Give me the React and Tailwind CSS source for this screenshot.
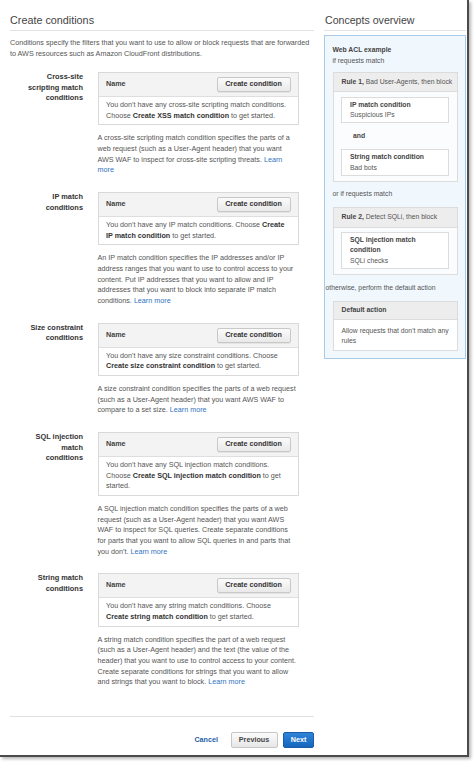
const sections = [
  {
    label: "Cross-site scripting match conditions",
    empty: (
      <>
        You don't have any cross-site scripting match conditions. Choose{" "}
        <b className="font-bold text-[#333]">Create XSS match condition</b> to get started.
      </>
    ),
    desc: "A cross-site scripting match condition specifies the parts of a web request (such as a User-Agent header) that you want AWS WAF to inspect for cross-site scripting threats.",
  },
  {
    label: "IP match conditions",
    empty: (
      <>
        You don't have any IP match conditions. Choose{" "}
        <b className="font-bold text-[#333]">Create IP match condition</b> to get started.
      </>
    ),
    desc: "An IP match condition specifies the IP addresses and/or IP address ranges that you want to use to control access to your content. Put IP addresses that you want to allow and IP addresses that you want to block into separate IP match conditions.",
  },
  {
    label: "Size constraint conditions",
    empty: (
      <>
        You don't have any size constraint conditions. Choose{" "}
        <b className="font-bold text-[#333]">Create size constraint condition</b> to get started.
      </>
    ),
    desc: "A size constraint condition specifies the parts of a web request (such as a User-Agent header) that you want AWS WAF to compare to a set size.",
  },
  {
    label: "SQL injection match conditions",
    empty: (
      <>
        You don't have any SQL injection match conditions. Choose{" "}
        <b className="font-bold text-[#333]">Create SQL injection match condition</b> to get started.
      </>
    ),
    desc: "A SQL injection match condition specifies the parts of a web request (such as a User-Agent header) that you want AWS WAF to inspect for SQL queries. Create separate conditions for parts that you want to allow SQL queries in and parts that you don't.",
  },
  {
    label: "String match conditions",
    empty: (
      <>
        You don't have any string match conditions. Choose{" "}
        <b className="font-bold text-[#333]">Create string match condition</b> to get started.
      </>
    ),
    desc: "A string match condition specifies the part of a web request (such as a User-Agent header) and the text (the value of the header) that you want to use to control access to your content. Create separate conditions for strings that you want to allow and strings that you want to block.",
  },
];

function Section({ s, first }) {
  return (
    <div className={`flex ${first ? "mt-[12.8px]" : "mt-[16px]"}`}>
      <div className="w-[73px] shrink-0 pl-[13px] text-right text-[7.4px] leading-[10.6px] font-bold text-[#333]">
        {s.label}
      </div>
      <div className="ml-[14.5px] w-[201px] shrink-0">
        <div className="border border-[#d9d9d9]">
          <div className="flex h-[24px] items-center justify-between border-b border-[#dedede] bg-[#f3f3f3] pl-[7.5px] pr-[7px]">
            <span className="text-[7.2px] font-bold text-[#444]">Name</span>
            <button className="h-[15px] w-[74px] rounded-[2px] border border-[#c8c8c8] bg-gradient-to-b from-[#fbfbfb] to-[#e9e9e9] text-[7.2px] font-bold text-[#333] shadow-[0_1px_0_rgba(0,0,0,0.06)]">
              Create condition
            </button>
          </div>
          <div className="bg-white py-[3px] pl-[7.5px] pr-[6px] text-[7.2px] leading-[10.65px] text-[#555]">
            {s.empty}
          </div>
        </div>
        <p className="mt-[8px] pr-[1px] text-[7.2px] leading-[10.65px] text-[#555]">
          {s.desc} <span className="text-[#2f74c0]">Learn more</span>
        </p>
      </div>
    </div>
  );
}

function CondBox({ title, sub }) {
  return (
    <div className="border border-[#dcdcdc] bg-white py-[2px] pl-[8px] pr-[6px] leading-[10.4px]">
      <div className="font-bold text-[#444]">{title}</div>
      <div>{sub}</div>
    </div>
  );
}

function Rule({ num, text, children }) {
  return (
    <div className="border border-[#dcdcdc] bg-[#fbfcfd]">
      <div className="flex h-[19.5px] items-center whitespace-nowrap border-b border-[#dcdcdc] bg-[#ededed] pl-[8px]">
        <b className="font-bold text-[#444]">Rule {num},</b>&nbsp;{text}
      </div>
      <div className="px-[7.5px] py-[4.5px]">{children}</div>
    </div>
  );
}

export default function App() {
  return (
    <div className="h-[762px] w-[474px] overflow-hidden bg-white font-['Liberation_Sans',Arial,sans-serif]">
      <div className="flex h-[757px] w-[469px] border-b-2 border-r-2 border-[#4b4b4b] bg-white pl-[10px] shadow-[2px_2px_3px_rgba(0,0,0,0.28)]">
        <div className="w-[304px] shrink-0">
          <h1 className="border-b border-[#e3e3e3] pb-[3px] pt-[12.5px] text-[10.8px] font-normal leading-[14px] text-[#444]">
            Create conditions
          </h1>
          <p className="mt-[7.7px] text-[7.2px] leading-[10.6px] text-[#555]">
            Conditions specify the filters that you want to use to allow or block requests that are forwarded to AWS
            resources such as Amazon CloudFront distributions.
          </p>
          {sections.map((s, i) => (
            <Section key={i} s={s} first={i === 0} />
          ))}
          <div className="mt-[28px] border-t border-[#e0e0e0]" />
          <div className="mt-[15.5px] flex items-center justify-end">
            <span className="mr-[12.5px] text-[7.2px] font-bold text-[#1f5fa8]">Cancel</span>
            <button className="h-[15.5px] w-[47px] rounded-[2px] border border-[#c6c6c6] bg-gradient-to-b from-[#fcfcfc] to-[#e6e6e6] text-[7.2px] font-bold text-[#444]">
              Previous
            </button>
            <button className="ml-[5.5px] h-[15.5px] w-[31px] rounded-[2px] border border-[#1a5ca6] bg-gradient-to-b from-[#2f84d8] to-[#1565bd] text-[7.2px] font-bold text-white">
              Next
            </button>
          </div>
        </div>
        <div className="ml-[10px] w-[142px] shrink-0">
          <h2 className="border-b border-[#e3e3e3] pb-[3px] pl-[1px] pt-[12.5px] text-[10.6px] font-normal leading-[14px] text-[#444]">
            Concepts overview
          </h2>
          <div className="mt-[4.5px] border border-[#a9cbe8] bg-[#f0f7fd] px-[7.5px] pb-[7.5px] pt-[8px] text-[6.8px] leading-[10.4px] text-[#555]">
            <div className="font-bold leading-[11px] text-[#444]">Web ACL example</div>
            <div className="leading-[11.5px]">if requests match</div>
            <div className="mt-[5px]">
              <Rule num="1" text="Bad User-Agents, then block">
                <CondBox title="IP match condition" sub="Suspicious IPs" />
                <div className="py-[7.8px] pl-[12px] font-bold text-[#444]">and</div>
                <CondBox title="String match condition" sub="Bad bots" />
              </Rule>
            </div>
            <div className="my-[7.5px]">or if requests match</div>
            <Rule num="2" text="Detect SQLi, then block">
              <CondBox title="SQL injection match condition" sub="SQLi checks" />
            </Rule>
            <div className="-ml-[7px] my-[8px] whitespace-nowrap">otherwise, perform the default action</div>
            <div className="border border-[#dcdcdc] bg-white">
              <div className="flex h-[18px] items-center border-b border-[#dcdcdc] bg-[#ededed] pl-[8px] font-bold text-[#444]">
                Default action
              </div>
              <div className="pb-[3.5px] pl-[8px] pr-[5px] pt-[5.5px]">Allow requests that don't match any rules</div>
            </div>
          </div>
        </div>
      </div>
    </div>
  );
}
